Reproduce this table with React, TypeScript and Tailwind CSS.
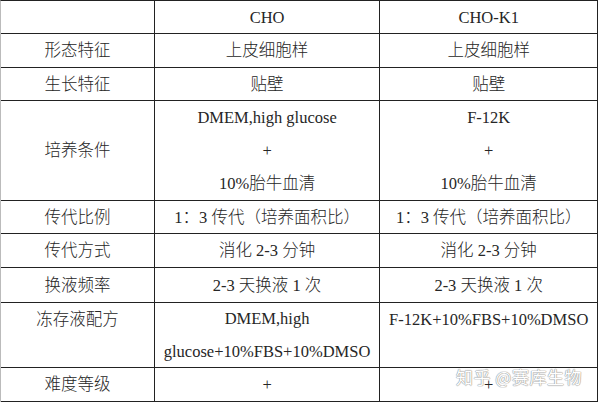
import React from "react";

type Cell = {
  lines: string[];
  align?: "top" | "middle";
};

type Row = {
  h: string;
  cells: [Cell, Cell, Cell];
};

const rows: Row[] = [
  { h: "h-[33px]", cells: [{ lines: [""] }, { lines: ["CHO"] }, { lines: ["CHO-K1"] }] },
  { h: "h-[34px]", cells: [{ lines: ["形态特征"] }, { lines: ["上皮细胞样"] }, { lines: ["上皮细胞样"] }] },
  { h: "h-[33px]", cells: [{ lines: ["生长特征"] }, { lines: ["贴壁"] }, { lines: ["贴壁"] }] },
  {
    h: "h-[100px]",
    cells: [
      { lines: ["培养条件"] },
      { lines: ["DMEM,high glucose", "+", "10%胎牛血清"] },
      { lines: ["F-12K", "+", "10%胎牛血清"] },
    ],
  },
  {
    h: "h-[33px]",
    cells: [
      { lines: ["传代比例"] },
      { lines: ["1：3 传代（培养面积比）"] },
      { lines: ["1：3 传代（培养面积比）"] },
    ],
  },
  { h: "h-[34px]", cells: [{ lines: ["传代方式"] }, { lines: ["消化 2-3 分钟"] }, { lines: ["消化 2-3 分钟"] }] },
  { h: "h-[35px]", cells: [{ lines: ["换液频率"] }, { lines: ["2-3 天换液 1 次"] }, { lines: ["2-3 天换液 1 次"] }] },
  {
    h: "h-[65px]",
    cells: [
      { lines: ["冻存液配方"], align: "top" },
      { lines: ["DMEM,high", "glucose+10%FBS+10%DMSO"] },
      { lines: ["F-12K+10%FBS+10%DMSO"], align: "top" },
    ],
  },
  { h: "h-[34px]", cells: [{ lines: ["难度等级"] }, { lines: ["+"] }, { lines: ["+"] }] },
];

const widths = ["w-[154px]", "w-[226px]", "w-[218px]"];

export default function App() {
  return (
    <div className="relative h-[402px] w-[600px] bg-white font-['Liberation_Serif','Noto_Sans_CJK_SC',serif] text-[16.5px] font-light text-[#262626]">
      <div className="flex w-[598px] flex-col border-t border-l border-t-[#222] border-l-[#bbb]">
        {rows.map((row, ri) => (
          <div key={ri} className={`flex ${row.h}`}>
            {row.cells.map((cell, ci) => (
              <div
                key={ci}
                className={`flex flex-col items-center border-r border-b border-[#222] ${widths[ci]} ${
                  cell.align === "top" ? "justify-start" : "justify-center"
                }`}
              >
                {cell.lines.map((line, li) => (
                  <div key={li} className="h-[33px] whitespace-nowrap leading-[33px]">
                    {line}
                  </div>
                ))}
              </div>
            ))}
          </div>
        ))}
      </div>

      {/* watermark */}
      <div className="absolute left-[456px] top-[366px] whitespace-nowrap font-['Noto_Sans_CJK_SC',sans-serif] text-[17px] font-normal leading-[22px] tracking-[0.5px] text-white [text-shadow:0_0_1px_#999,0_0_1px_#999,0_0_1px_#999]">
        知乎 @赛库生物
      </div>
    </div>
  );
}
